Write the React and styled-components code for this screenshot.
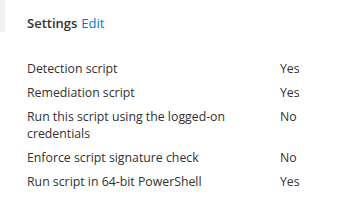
import React from "react";
import styled, { createGlobalStyle } from "styled-components";

const GlobalStyle = createGlobalStyle`
  html, body {
    margin: 0;
    padding: 0;
    background: #ffffff;
  }
  body {
    font-family: "Open Sans", "Noto Sans", sans-serif;
    color: #323130;
  }
`;

const Page = styled.div`
  display: flex;
  flex-direction: row;
  width: 348px;
  height: 210px;
  overflow: hidden;
`;

const Rail = styled.div`
  width: 5px;
  height: 32px;
  background: #f2f2f2;
  flex-shrink: 0;
`;

const Panel = styled.section`
  display: flex;
  flex-direction: column;
  padding: 13px 0 0 22px;
  flex: 1;
`;

const Header = styled.div`
  display: flex;
  align-items: baseline;
  gap: 4px;
`;

const Title = styled.h2`
  margin: 0;
  font-size: 13px;
  font-weight: 600;
  line-height: 20px;
  color: #323130;
`;

const EditLink = styled.a`
  font-size: 13px;
  line-height: 20px;
  color: #0078d4;
  text-decoration: none;
  cursor: pointer;
`;

const List = styled.dl`
  display: grid;
  grid-template-columns: 253px auto;
  row-gap: 7px;
  margin: 27px 0 0 0;
`;

const Label = styled.dt`
  margin: 0;
  font-size: 12.3px;
  line-height: 17px;
`;

const Value = styled.dd`
  margin: 0;
  font-size: 12.3px;
  line-height: 17px;
`;

const rows = [
  ["Detection script", "Yes"],
  ["Remediation script", "Yes"],
  ["Run this script using the logged-on credentials", "No"],
  ["Enforce script signature check", "No"],
  ["Run script in 64-bit PowerShell", "Yes"],
];

export default function App() {
  return (
    <>
      <GlobalStyle />
      <Page>
        <Rail />
        <Panel>
          <Header>
            <Title>Settings</Title>
            <EditLink>Edit</EditLink>
          </Header>
          <List>
            {rows.map(([label, value]) => (
              <React.Fragment key={label}>
                <Label>{label}</Label>
                <Value>{value}</Value>
              </React.Fragment>
            ))}
          </List>
        </Panel>
      </Page>
    </>
  );
}
